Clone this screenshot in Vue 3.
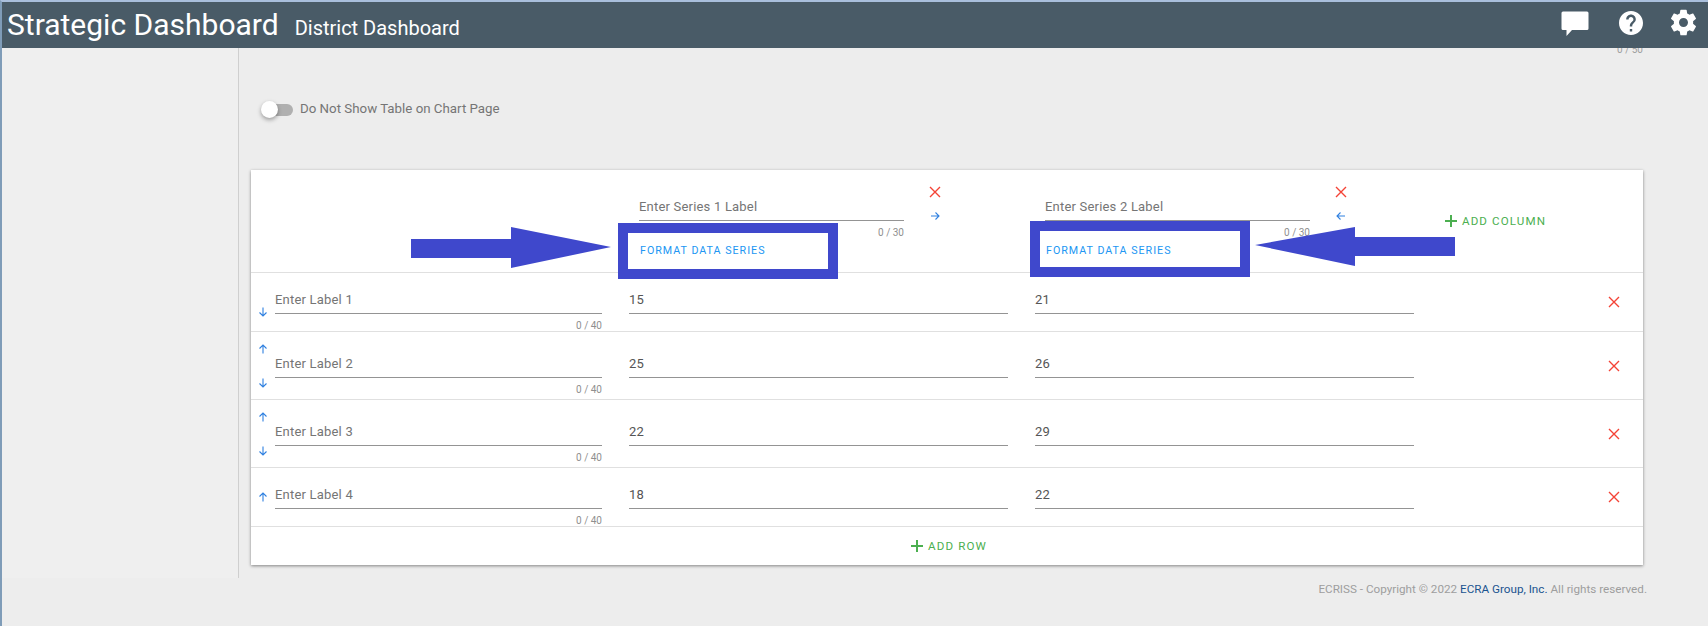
<script setup>
const rows = [
  { label: 'Enter Label 1', a: 15, b: 21, up: false, down: true, cls: 'short' },
  { label: 'Enter Label 2', a: 25, b: 26, up: true, down: true, cls: 'tall' },
  { label: 'Enter Label 3', a: 22, b: 29, up: true, down: true, cls: 'tall' },
  { label: 'Enter Label 4', a: 18, b: 22, up: true, down: false, cls: 'short' }
]
</script>

<template>
  <div class="app">
    <header class="topbar">
      <div class="titles">
        <span class="title">Strategic Dashboard</span>
        <span class="subtitle">District Dashboard</span>
      </div>
      <div class="actions">
        <svg class="chat" width="28" height="26" viewBox="0 0 28 26"><path d="M2 0.5h24a1.5 1.5 0 0 1 1.5 1.5v15.5a1.5 1.5 0 0 1-1.5 1.5H11l-5.500 6v-6H2a1.500 1.500 0 0 1-1.500-1.500V2A1.500 1.500 0 0 1 2 0.500z" fill="#fff"/></svg>
        <svg class="help" width="24" height="24" viewBox="2 2 20 20"><path fill="#fff" d="M12 2C6.480 2 2 6.480 2 12s4.480 10 10 10 10-4.480 10-10S17.520 2 12 2zm1 17h-2v-2h2v2zm2.070-7.750-.9.920C13.450 12.900 13 13.500 13 15h-2v-.5c0-1.100.450-2.100 1.170-2.830l1.240-1.260c.370-.360.590-.860.590-1.410 0-1.100-.9-2-2-2s-2 .9-2 2H8c0-2.210 1.790-4 4-4s4 1.790 4 4c0 .880-.360 1.680-.930 2.250z"/></svg>
        <svg class="gear" width="27" height="27" viewBox="2.500 1.500 19 21"><path fill="#fff" d="M19.430 12.980c.040-.320.070-.640.070-.980s-.030-.660-.070-.980l2.110-1.650c.190-.150.240-.420.120-.640l-2-3.460c-.120-.220-.390-.300-.610-.220l-2.490 1c-.520-.400-1.080-.730-1.690-.980l-.380-2.650C14.460 2.180 14.250 2 14 2h-4c-.250 0-.460.180-.490.420l-.380 2.650c-.610.250-1.170.590-1.690.980l-2.490-1c-.230-.090-.490 0-.610.220l-2 3.460c-.130.220-.070.490.120.640l2.110 1.650c-.040.320-.070.650-.070.980s.030.660.070.980l-2.110 1.650c-.190.150-.240.420-.120.640l2 3.460c.120.220.390.300.610.220l2.490-1c.520.400 1.080.730 1.690.980l.380 2.650c.030.240.240.420.490.420h4c.250 0 .460-.180.490-.420l.380-2.650c.610-.250 1.170-.590 1.690-.980l2.490 1c.230.090.490 0 .610-.220l2-3.460c.120-.220.070-.490-.120-.640l-2.110-1.650zM12 15.500c-1.930 0-3.500-1.570-3.500-3.500s1.570-3.500 3.500-3.500 3.500 1.570 3.500 3.500-1.570 3.500-3.500 3.500z"/></svg>
      </div>
    </header>

    <div class="body">
      <aside class="sidebar"></aside>
      <main class="main">
        <div class="clipped-count">0 / 50</div>

        <div class="toggle-row">
          <span class="toggle"><span class="knob"></span></span>
          <span class="toggle-label">Do Not Show Table on Chart Page</span>
        </div>

        <section class="card">
          <div class="card-head">
            <div class="series">
              <div class="input placeholder">Enter Series 1 Label</div>
              <div class="count">0 / 30</div>
              <div class="format">FORMAT DATA SERIES</div>
            </div>
            <div class="tools">
              <svg class="x" width="14" height="14" viewBox="0 0 14 14"><path d="M2 2l10 10M12 2L2 12"/></svg>
              <svg class="arrow" width="12" height="12" viewBox="0 0 12 12"><path d="M2 6h8M6.500 2.500L10 6l-3.500 3.500"/></svg>
            </div>
            <div class="series second">
              <div class="input placeholder">Enter Series 2 Label</div>
              <div class="count">0 / 30</div>
              <div class="format">FORMAT DATA SERIES</div>
            </div>
            <div class="tools">
              <svg class="x" width="14" height="14" viewBox="0 0 14 14"><path d="M2 2l10 10M12 2L2 12"/></svg>
              <svg class="arrow" width="12" height="12" viewBox="0 0 12 12"><path d="M10 6H2M5.500 2.500L2 6l3.500 3.500"/></svg>
            </div>
            <div class="add add-col">
              <svg class="plus" width="14" height="14" viewBox="0 0 14 14"><path d="M7 1v12M1 7h12"/></svg>
              <span>ADD COLUMN</span>
            </div>
          </div>

          <div v-for="r in rows" :key="r.label" class="row" :class="r.cls">
            <div class="moves" :class="{ 'only-down': !r.up, 'only-up': !r.down }">
              <svg v-if="r.up" class="arrow" width="12" height="12" viewBox="0 0 12 12"><path d="M6 10.500V2M2.500 5.500L6 2l3.500 3.500"/></svg>
              <svg v-if="r.down" class="arrow" width="12" height="12" viewBox="0 0 12 12"><path d="M6 1.500V10M2.500 6.500L6 10l3.500-3.500"/></svg>
            </div>
            <div class="field label-field">
              <div class="input placeholder">{{ r.label }}</div>
              <div class="count">0 / 40</div>
            </div>
            <div class="field value-field">
              <div class="input">{{ r.a }}</div>
            </div>
            <div class="field value-field">
              <div class="input">{{ r.b }}</div>
            </div>
            <svg class="x row-x" width="14" height="14" viewBox="0 0 14 14"><path d="M2 2l10 10M12 2L2 12"/></svg>
          </div>

          <div class="add add-row">
            <svg class="plus" width="14" height="14" viewBox="0 0 14 14"><path d="M7 1v12M1 7h12"/></svg>
            <span>ADD ROW</span>
          </div>
        </section>

        <footer class="footer">ECRISS - Copyright © 2022 <span class="link">ECRA Group, Inc.</span> All rights reserved.</footer>
      </main>
    </div>

    <svg class="annotations" width="1708" height="626" viewBox="0 0 1708 626">
      <g fill="#3f48cc">
        <path d="M411 239h100v-12l100 20-100 21v-10h-100z"/>
        <path d="M1455 237h-100v-10l-100 18 100 21v-10h100z"/>
      </g>
      <g fill="none" stroke="#3f48cc" stroke-width="10">
        <rect x="623" y="228" width="210" height="46"/>
        <rect x="1035" y="226" width="210" height="46"/>
      </g>
    </svg>
    <i class="edge-mark dark"></i>
    <i class="edge-mark orange"></i>
  </div>
</template>

<style scoped>
.app {
  position: relative;
  width: 1708px;
  height: 626px;
  box-sizing: border-box;
  overflow: hidden;
  background: #ededed;
  border-left: 2px solid #7f9cb8;
  border-top: 2px solid #a9bfdc;
  font-family: Roboto, "Liberation Sans", sans-serif;
}
.topbar {
  position: relative;
  z-index: 2;
  height: 46px;
  background: #495b67;
  color: #fff;
  display: flex;
  align-items: center;
  justify-content: space-between;
}
.titles {
  display: flex;
  align-items: baseline;
  padding-left: 5px;
}
.title {
  font-size: 30px;
  line-height: 46px;
}
.subtitle {
  font-size: 20px;
  margin-left: 16px;
}
.actions {
  display: flex;
  align-items: center;
  padding-right: 11px;
}
.chat { margin-top: -2px; }
.help { margin-left: 30px; margin-top: -4px; }
.gear { margin-left: 27px; margin-top: -5px; }

.body {
  display: flex;
  align-items: flex-start;
}
.sidebar {
  width: 236px;
  height: 530px;
  flex: none;
  background: #efefef;
  border-right: 1px solid #cfcfcf;
}
.main {
  flex: 1;
  min-width: 0;
  padding-left: 12px;
}
.clipped-count {
  font-size: 10px;
  line-height: 14px;
  margin-top: -5px;
  width: 1392px;
  text-align: right;
  color: #9e9e9e;
}
.toggle-row {
  display: flex;
  align-items: center;
  height: 24px;
  margin-top: 40px;
  padding-left: 10px;
}
.toggle {
  position: relative;
  width: 23px;
  height: 12px;
  margin-left: 9px;
  margin-top: 2px;
  border-radius: 6px;
  background: #b0b0b0;
  flex: none;
}
.knob {
  position: absolute;
  left: -9px;
  top: -3px;
  width: 17px;
  height: 17px;
  border-radius: 50%;
  background: #fff;
  box-shadow: 0 2px 4px rgba(0, 0, 0, 0.35);
}
.toggle-label {
  font-size: 13.300px;
  color: #757575;
  margin-left: 7px;
  margin-top: -1px;
}
.card {
  width: 1392px;
  margin-top: 49px;
  background: #fff;
  box-shadow: 0 1px 3px rgba(0, 0, 0, 0.45);
}
.card-head {
  height: 102px;
  display: flex;
  padding-left: 388px;
  box-sizing: border-box;
}
.series {
  width: 265px;
  padding-top: 27px;
  flex: none;
}
.series.second { margin-left: 103px; }
.input {
  font-size: 13px;
  line-height: 20px;
  padding-bottom: 3px;
  border-bottom: 1px solid #949494;
  color: #555;
  letter-spacing: 0.2px;
}
.placeholder { color: #757575; }
.count {
  font-size: 10px;
  line-height: 13px;
  margin-top: 5px;
  text-align: right;
  color: #8f8f8f;
}
.format {
  font-size: 10.700px;
  line-height: 24px;
  letter-spacing: 1px;
  color: #2196f3;
  padding-left: 1px;
}
.tools {
  display: flex;
  flex-direction: column;
  align-items: center;
  width: 14px;
  margin-left: 24px;
  padding-top: 15px;
}
.tools .arrow { margin-top: 11px; }
.x { flex: none; }
.x path {
  fill: none;
  stroke: #f44336;
  stroke-width: 1.400;
}
.arrow path {
  fill: none;
  stroke: #2f80e0;
  stroke-width: 1.100;
}
.plus path {
  fill: none;
  stroke: #4caf50;
  stroke-width: 2;
}
.add {
  display: flex;
  align-items: center;
  font-size: 11.600px;
  line-height: 20px;
  letter-spacing: 1.100px;
  color: #4caf50;
}
.add .plus { margin-right: 4px; }
.add-col {
  align-self: flex-start;
  margin-top: 41px;
  margin-left: 96px;
}
.row {
  display: flex;
  align-items: center;
  border-top: 1px solid #e0e0e0;
  box-sizing: border-box;
}
.row.short { height: 59px; }
.row.tall { height: 68px; }
.moves {
  width: 12px;
  height: 46px;
  margin-left: 6px;
  margin-right: 6px;
  flex: none;
  display: flex;
  flex-direction: column;
  justify-content: space-between;
}
.moves svg { display: block; }
.moves.only-down { justify-content: flex-end; height: 32px; padding-top: 8px; box-sizing: border-box; }
.moves.only-up { justify-content: center; }
.field {
  height: 60px;
  flex: none;
  padding-top: 18px;
  box-sizing: border-box;
}
.label-field { width: 327px; }
.value-field { width: 379px; margin-left: 27px; }
.row-x { margin-left: 193px; }
.add-row {
  height: 39px;
  justify-content: center;
  border-top: 1px solid #e0e0e0;
  box-sizing: border-box;
  padding-left: 3px;
}
.footer {
  width: 1396px;
  margin-top: 16px;
  font-size: 11.700px;
  line-height: 16px;
  text-align: right;
  color: #9e9e9e;
}
.link { color: #1a5490; }
.annotations {
  position: absolute;
  left: -2px;
  top: -2px;
  z-index: 3;
  pointer-events: none;
}
.edge-mark {
  position: absolute;
  left: -2px;
  width: 2px;
  z-index: 3;
}
.edge-mark.dark { top: 226px; height: 6px; background: #2a2a2a; }
.edge-mark.orange { top: 585px; height: 11px; background: #c98a4e; }
</style>

<style>
html, body {
  margin: 0;
  background: #ededed;
}
</style>
